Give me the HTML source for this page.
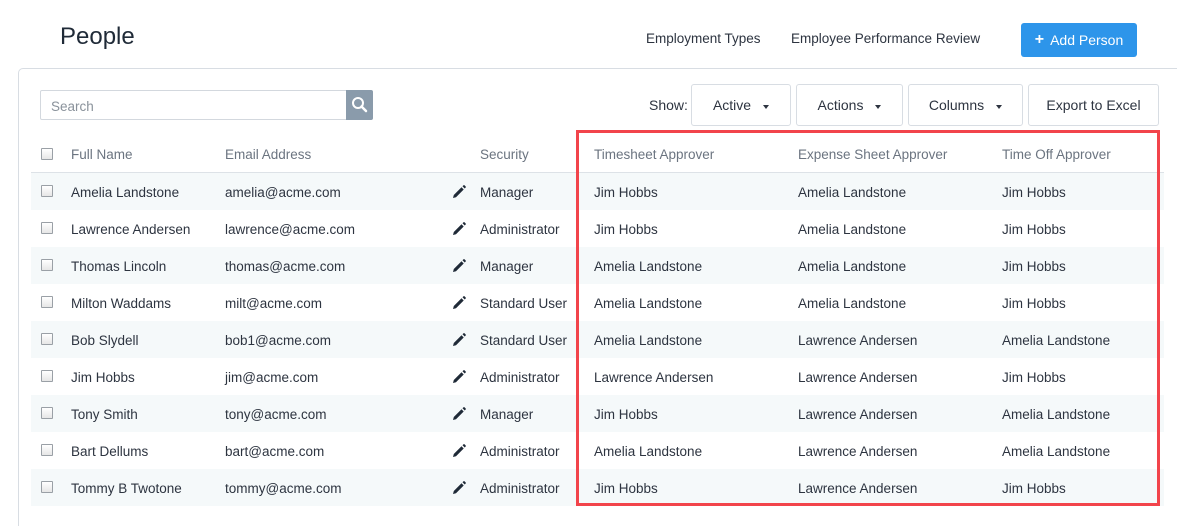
<!DOCTYPE html>
<html style="width:1177px;height:526px;overflow:hidden"><head><meta charset="utf-8"><style>
*{box-sizing:border-box;margin:0;padding:0}
body{width:1177px;height:526px;background:#fff;font-family:"Liberation Sans",sans-serif;font-size:13.5px;color:#2d3440;position:relative;overflow:hidden}
.a{position:absolute;white-space:nowrap}
.panel{position:absolute;left:18px;top:68px;width:1180px;height:470px;border:1px solid #d8dde3;border-radius:5px}
.btn{position:absolute;top:84px;height:42px;border:1px solid #d8dde3;border-radius:3px;background:#fff;display:flex;align-items:center;justify-content:center;font-size:14px;color:#2d3440}
.caret{display:inline-block;width:0;height:0;border-left:3px solid transparent;border-right:3px solid transparent;border-top:4px solid #2d3440;margin-left:12px;margin-top:3px}
.row{position:absolute;left:31px;width:1133px;height:37px}
.row.o{background:#f5f9fa}
.cb{position:absolute;left:10px;top:12px;width:12px;height:12px;border:1px solid #9aa0a6;background:linear-gradient(#fff,#e6e6e6);border-radius:1px}
.row span{position:absolute;top:12px}
.hd{position:absolute;top:147px;color:#6b7480;font-size:13.5px}
</style></head><body>
<div class="a" style="left:60px;top:23px;font-size:24px;color:#1f2a37">People</div>
<div class="a" style="left:646px;top:31px;font-size:13.5px">Employment Types</div>
<div class="a" style="left:791px;top:31px;font-size:13.5px">Employee Performance Review</div>
<div class="a" style="left:1021px;top:23px;width:116px;height:34px;background:#2d95ea;border-radius:3px;color:#fff;font-size:14px;display:flex;align-items:center;justify-content:center"><b style="font-size:16px;margin-right:6px">+</b>Add Person</div>
<div class="panel"></div>
<div class="a" style="left:40px;top:90px;width:307px;height:30px;border:1px solid #d3d8de;border-radius:2px 0 0 2px;padding:8px 10px;color:#8a929b;font-size:13.5px">Search</div>
<div class="a" style="left:346px;top:90px;width:27px;height:30px;background:#8a9bab;border-radius:0 2px 2px 0">
<svg width="27" height="30" viewBox="0 0 27 30"><circle cx="12" cy="13" r="5" fill="none" stroke="#fff" stroke-width="2"/><line x1="15.5" y1="16.5" x2="20" y2="21" stroke="#fff" stroke-width="2.5" stroke-linecap="round"/></svg></div>
<div class="a" style="left:649px;top:97px;font-size:14px">Show:</div>
<div class="btn" style="left:691px;width:100px">Active<span class="caret"></span></div>
<div class="btn" style="left:796px;width:107px">Actions<span class="caret"></span></div>
<div class="btn" style="left:908px;width:115px">Columns<span class="caret"></span></div>
<div class="btn" style="left:1028px;width:131px">Export to Excel</div>
<div class="cb" style="position:absolute;left:41px;top:148px"></div>
<div class="hd" style="left:71px">Full Name</div>
<div class="hd" style="left:225px">Email Address</div>
<div class="hd" style="left:480px">Security</div>
<div class="hd" style="left:594px">Timesheet Approver</div>
<div class="hd" style="left:798px">Expense Sheet Approver</div>
<div class="hd" style="left:1002px">Time Off Approver</div>
<div class="a" style="left:31px;top:172px;width:1133px;height:1px;background:#dde2e7"></div>
<div id="rows"></div>
<div class="a" style="left:576px;top:130px;width:584px;height:376px;border:3px solid #f2444b"></div>
<script>
var d=[["Amelia Landstone","amelia@acme.com","Manager","Jim Hobbs","Amelia Landstone","Jim Hobbs"],
["Lawrence Andersen","lawrence@acme.com","Administrator","Jim Hobbs","Amelia Landstone","Jim Hobbs"],
["Thomas Lincoln","thomas@acme.com","Manager","Amelia Landstone","Amelia Landstone","Jim Hobbs"],
["Milton Waddams","milt@acme.com","Standard User","Amelia Landstone","Amelia Landstone","Jim Hobbs"],
["Bob Slydell","bob1@acme.com","Standard User","Amelia Landstone","Lawrence Andersen","Amelia Landstone"],
["Jim Hobbs","jim@acme.com","Administrator","Lawrence Andersen","Lawrence Andersen","Jim Hobbs"],
["Tony Smith","tony@acme.com","Manager","Jim Hobbs","Lawrence Andersen","Amelia Landstone"],
["Bart Dellums","bart@acme.com","Administrator","Amelia Landstone","Lawrence Andersen","Amelia Landstone"],
["Tommy B Twotone","tommy@acme.com","Administrator","Jim Hobbs","Lawrence Andersen","Jim Hobbs"]];
var h="";var pen='<svg style="position:absolute;left:421px;top:12px" width="14" height="14" viewBox="0 0 14 14"><path d="M1 13 L1.8 10 L9.5 2.3 L11.7 4.5 L4 12.2 Z M10.5 1.3 L11.5 0.3 Q12 0 12.5 0.3 L13.7 1.5 Q14 2 13.7 2.5 L12.7 3.5 Z" fill="#1f2a37"/></svg>';
d.forEach(function(r,i){h+='<div class="row'+(i%2==0?' o':'')+'" style="top:'+(173+i*37)+'px"><div class="cb"></div><span style="left:40px">'+r[0]+'</span><span style="left:194px">'+r[1]+'</span>'+pen+'<span style="left:449px">'+r[2]+'</span><span style="left:563px">'+r[3]+'</span><span style="left:767px">'+r[4]+'</span><span style="left:971px">'+r[5]+'</span></div>';});
document.getElementById("rows").innerHTML=h;
</script>
</body></html>
